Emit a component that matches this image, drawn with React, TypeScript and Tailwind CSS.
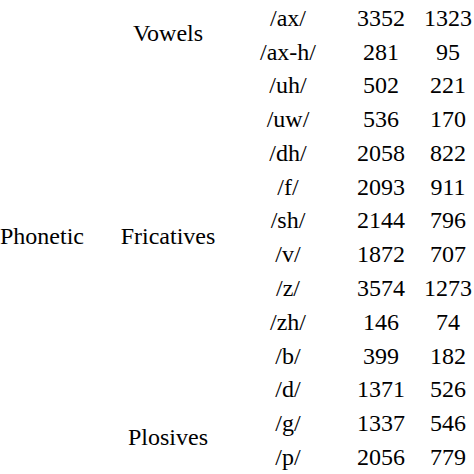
const rows: [string, string, string][] = [
  ["/ax/", "3352", "1323"],
  ["/ax-h/", "281", "95"],
  ["/uh/", "502", "221"],
  ["/uw/", "536", "170"],
  ["/dh/", "2058", "822"],
  ["/f/", "2093", "911"],
  ["/sh/", "2144", "796"],
  ["/v/", "1872", "707"],
  ["/z/", "3574", "1273"],
  ["/zh/", "146", "74"],
  ["/b/", "399", "182"],
  ["/d/", "1371", "526"],
  ["/g/", "1337", "546"],
  ["/p/", "2056", "779"],
]

export default function App() {
  return (
    <div className="font-['Liberation_Serif'] text-[24px] pt-[1px] flex">
      {/* Top-level label */}
      <div className="w-[100px] flex items-center pb-[2px]">Phonetic</div>

      {/* Category labels */}
      <div className="w-[136px] flex flex-col text-center">
        <div className="h-[67.5px] flex items-center justify-center pb-[4px]">Vowels</div>
        <div className="h-[67.5px]" />
        <div className="h-[202.6px] flex items-center justify-center pb-[2px]">Fricatives</div>
        <div className="h-[67.5px]" />
        <div className="h-[67.5px] flex items-center justify-center pb-[6px]">Plosives</div>
      </div>

      {/* Phoneme counts */}
      <div className="flex flex-col">
        {rows.map(([ph, a, b]) => (
          <div key={ph} className="h-[33.77px] flex items-center text-center">
            <div className="w-[104px]">{ph}</div>
            <div className="w-[82px]">{a}</div>
            <div className="w-[52px]">{b}</div>
          </div>
        ))}
      </div>
    </div>
  )
}
